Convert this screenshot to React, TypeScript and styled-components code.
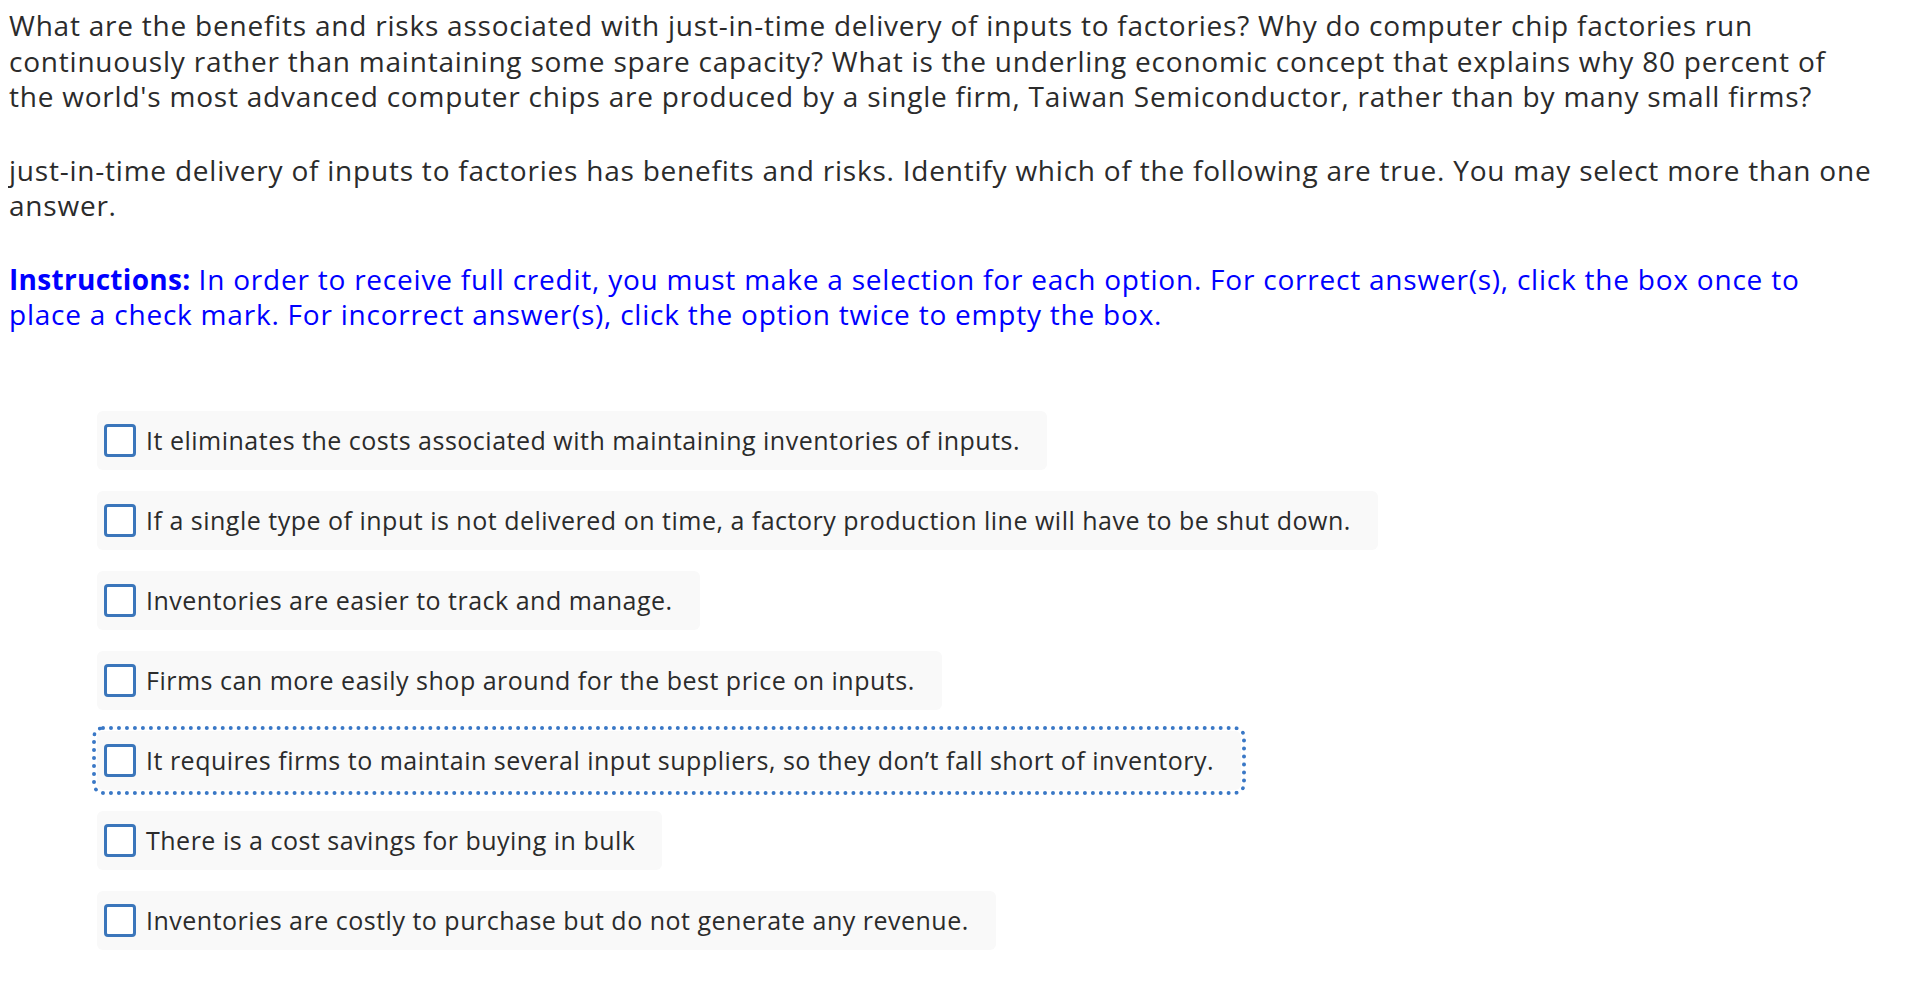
import { useState } from 'react'
import styled, { createGlobalStyle } from 'styled-components'

const options = [
  'It eliminates the costs associated with maintaining inventories of inputs.',
  'If a single type of input is not delivered on time, a factory production line will have to be shut down.',
  'Inventories are easier to track and manage.',
  'Firms can more easily shop around for the best price on inputs.',
  'It requires firms to maintain several input suppliers, so they don’t fall short of inventory.',
  'There is a cost savings for buying in bulk',
  'Inventories are costly to purchase but do not generate any revenue.',
]

const App = () => {
  const [checked, setChecked] = useState<boolean[]>(options.map(() => false))
  const [focused, setFocused] = useState(4)

  const toggle = (i: number) => {
    setFocused(i)
    setChecked(prev => prev.map((c, j) => (j === i ? !c : c)))
  }

  return <Page>
    <GlobalStyle />
    <Question>
      What are the benefits and risks associated with just-in-time delivery of inputs to factories? Why do computer chip factories run continuously rather than maintaining some spare capacity? What is the underling economic concept that explains why 80 percent of the world's most advanced computer chips are produced by a single firm, Taiwan Semiconductor, rather than by many small firms?
    </Question>
    <Question>
      just-in-time delivery of inputs to factories has benefits and risks. Identify which of the following are true. You may select more than one answer.
    </Question>
    <Instructions>
      <Label>Instructions:</Label> In order to receive full credit, you must make a selection for each option. For correct answer(s), click the box once to place a check mark. For incorrect answer(s), click the option twice to empty the box.
    </Instructions>
    <OptionList>
      {options.map((text, i) => (
        <Option key={i} type='button' $focused={focused === i} onClick={() => toggle(i)}>
          <Box>{checked[i] && <svg width='22' height='22' viewBox='0 0 22 22'><path d='M4 11.5l4.5 4.5L18 6' fill='none' stroke='#3b76bb' strokeWidth='3' strokeLinecap='round' strokeLinejoin='round' /></svg>}</Box>
          <OptionText>{text}</OptionText>
        </Option>
      ))}
    </OptionList>
  </Page>
}

const GlobalStyle = createGlobalStyle`
  body {
    margin: 8px;
    background: #ffffff;
    font-family: "Open Sans", Lato, sans-serif;
    font-variant-ligatures: none;
    color: #2b2b2b;
  }
`

const Page = styled.div`
  width: 1866px;
  padding-left: 1px;
`

const Question = styled.p`
  margin: 0 0 38px;
  font-size: 28px;
  line-height: 35.5px;
  letter-spacing: 0.78px;
`

const Instructions = styled(Question)`
  color: #0000ff;
  margin-bottom: 78px;
`

const Label = styled.b`
  font-weight: 700;
  letter-spacing: 0.3px;
`

const OptionList = styled.div`
  display: flex;
  flex-direction: column;
  align-items: flex-start;
  gap: 21px;
  padding-left: 88px;
`

const Option = styled.button<{ $focused: boolean }>`
  display: inline-flex;
  align-items: center;
  gap: 10px;
  height: 59px;
  padding: 0 27px 0 7px;
  border: none;
  border-radius: 6px;
  background: #f9f9f9;
  font: inherit;
  color: inherit;
  cursor: pointer;
  outline: ${p => (p.$focused ? '4px dotted #3a78c6' : 'none')};
  outline-offset: 1px;
`

const Box = styled.span`
  display: flex;
  align-items: center;
  justify-content: center;
  box-sizing: border-box;
  width: 32px;
  height: 33px;
  border: 3px solid #3b76bb;
  border-radius: 4px;
  background: #ffffff;
`

const OptionText = styled.span`
  font-size: 25px;
  letter-spacing: 0.5px;
  color: #2b2b2b;
`

export default App
